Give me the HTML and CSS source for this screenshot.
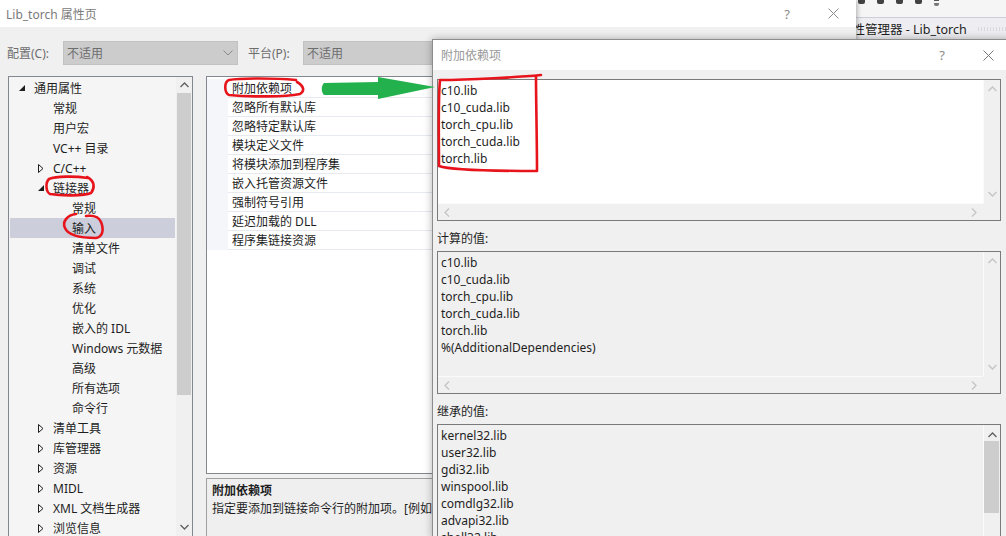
FILE: index.html
```html
<!DOCTYPE html>
<html lang="zh-CN">
<head>
    <meta charset="UTF-8">
    <title>Lib_torch 属性页</title>
    <link rel="stylesheet" href="styles.css">
</head>
<body>
<div class="desk">

    <div class="props">
        <div class="titlebar">
            <span class="title">Lib_torch 属性页</span>
            <span class="tb-btn">?</span>
            <span class="tb-btn"><svg width="11" height="11"><path d="M0.5 0.5 L10.5 10.5 M10.5 0.5 L0.5 10.5" stroke="#8a8a8a" stroke-width="1"/></svg></span>
        </div>

        <div class="config">
            <span class="lbl">配置(C):</span>
            <div class="combo"><span>不适用</span><svg width="10" height="6"><path d="M0.5 0.5 L5 5 L9.5 0.5" fill="none" stroke="#8a8a8a"/></svg></div>
            <span class="lbl plat">平台(P):</span>
            <div class="combo"><span>不适用</span></div>
        </div>

        <div class="main">
            <div class="tree">
                <div class="nodes">
                    <div class="node l0"><span class="tw"><svg width="6" height="6"><path d="M6 0 L6 6 L0 6 Z" fill="#1e1e1e"/></svg></span>通用属性</div>
                    <div class="node l1"><span class="tw"></span>常规</div>
                    <div class="node l1"><span class="tw"></span>用户宏</div>
                    <div class="node l1"><span class="tw"></span>VC++ 目录</div>
                    <div class="node l1"><span class="tw"><svg width="6" height="9"><path d="M0.5 0.5 L5 4.5 L0.5 8.5 Z" fill="none" stroke="#1e1e1e"/></svg></span>C/C++</div>
                    <div class="node l1"><span class="tw"><svg width="6" height="6"><path d="M6 0 L6 6 L0 6 Z" fill="#1e1e1e"/></svg></span>链接器</div>
                    <div class="node l2"><span class="tw"></span>常规</div>
                    <div class="node l2 sel"><span class="tw"></span>输入</div>
                    <div class="node l2"><span class="tw"></span>清单文件</div>
                    <div class="node l2"><span class="tw"></span>调试</div>
                    <div class="node l2"><span class="tw"></span>系统</div>
                    <div class="node l2"><span class="tw"></span>优化</div>
                    <div class="node l2"><span class="tw"></span>嵌入的 IDL</div>
                    <div class="node l2"><span class="tw"></span>Windows 元数据</div>
                    <div class="node l2"><span class="tw"></span>高级</div>
                    <div class="node l2"><span class="tw"></span>所有选项</div>
                    <div class="node l2"><span class="tw"></span>命令行</div>
                    <div class="node l1"><span class="tw"><svg width="6" height="9"><path d="M0.5 0.5 L5 4.5 L0.5 8.5 Z" fill="none" stroke="#1e1e1e"/></svg></span>清单工具</div>
                    <div class="node l1"><span class="tw"><svg width="6" height="9"><path d="M0.5 0.5 L5 4.5 L0.5 8.5 Z" fill="none" stroke="#1e1e1e"/></svg></span>库管理器</div>
                    <div class="node l1"><span class="tw"><svg width="6" height="9"><path d="M0.5 0.5 L5 4.5 L0.5 8.5 Z" fill="none" stroke="#1e1e1e"/></svg></span>资源</div>
                    <div class="node l1"><span class="tw"><svg width="6" height="9"><path d="M0.5 0.5 L5 4.5 L0.5 8.5 Z" fill="none" stroke="#1e1e1e"/></svg></span>MIDL</div>
                    <div class="node l1"><span class="tw"><svg width="6" height="9"><path d="M0.5 0.5 L5 4.5 L0.5 8.5 Z" fill="none" stroke="#1e1e1e"/></svg></span>XML 文档生成器</div>
                    <div class="node l1"><span class="tw"><svg width="6" height="9"><path d="M0.5 0.5 L5 4.5 L0.5 8.5 Z" fill="none" stroke="#1e1e1e"/></svg></span>浏览信息</div>
                </div>
                <div class="tree-scroll">
                    <div class="sb-btn"><svg width="9" height="6"><path d="M0.5 5 L4.5 1 L8.5 5" fill="none" stroke="#606060" stroke-width="1.3"/></svg></div>
                    <div class="tree-thumb"></div>
                    <div class="sb-btn end"><svg width="9" height="6"><path d="M0.5 1 L4.5 5 L8.5 1" fill="none" stroke="#606060" stroke-width="1.3"/></svg></div>
                </div>
            </div>

            <div class="right">
                <div class="grid">
                    <div class="prop"><span class="gut"></span><span class="name">附加依赖项</span></div>
                    <div class="prop"><span class="gut"></span><span class="name">忽略所有默认库</span></div>
                    <div class="prop"><span class="gut"></span><span class="name">忽略特定默认库</span></div>
                    <div class="prop"><span class="gut"></span><span class="name">模块定义文件</span></div>
                    <div class="prop"><span class="gut"></span><span class="name">将模块添加到程序集</span></div>
                    <div class="prop"><span class="gut"></span><span class="name">嵌入托管资源文件</span></div>
                    <div class="prop"><span class="gut"></span><span class="name">强制符号引用</span></div>
                    <div class="prop"><span class="gut"></span><span class="name">延迟加载的 DLL</span></div>
                    <div class="prop"><span class="gut"></span><span class="name">程序集链接资源</span></div>
                </div>
                <div class="desc">
                    <div class="desc-title">附加依赖项</div>
                    <div>指定要添加到链接命令行的附加项。[例如</div>
                </div>
            </div>
        </div>
    </div>

    <div class="vs">
        <div class="vs-tools">
            <span class="tool"></span><span class="tool"></span><span class="tool"></span><span class="tool"></span><span class="tool drop"></span>
        </div>
        <div class="vs-tab">
            <span class="vs-name">属性管理器 - Lib_torch</span>
            <span class="grip"></span>
        </div>
    </div>

    <div class="dialog">
        <div class="dlg-title">
            <span class="title">附加依赖项</span>
            <span class="tb-btn">?</span>
            <span class="tb-btn"><svg width="11" height="11"><path d="M0.5 0.5 L10.5 10.5 M10.5 0.5 L0.5 10.5" stroke="#777" stroke-width="1"/></svg></span>
        </div>
        <div class="dlg-body">
            <div class="edit main-edit">
                <div class="lines">
                    <div>c10.lib</div>
                    <div>c10_cuda.lib</div>
                    <div>torch_cpu.lib</div>
                    <div>torch_cuda.lib</div>
                    <div>torch.lib</div>
                </div>
                <div class="vbar">
                    <svg width="9" height="6"><path d="M0.5 5 L4.5 1 L8.5 5" fill="none" stroke="#c4c4c4" stroke-width="1.3"/></svg>
                    <svg width="9" height="6"><path d="M0.5 1 L4.5 5 L8.5 1" fill="none" stroke="#c4c4c4" stroke-width="1.3"/></svg>
                </div>
                <div class="hbar">
                    <svg width="6" height="9"><path d="M5 0.5 L1 4.5 L5 8.5" fill="none" stroke="#c4c4c4" stroke-width="1.3"/></svg>
                    <svg width="6" height="9"><path d="M1 0.5 L5 4.5 L1 8.5" fill="none" stroke="#c4c4c4" stroke-width="1.3"/></svg>
                </div>
                <div class="corner"></div>
            </div>

            <div class="field-label">计算的值:</div>
            <div class="edit calc-edit">
                <div class="lines">
                    <div>c10.lib</div>
                    <div>c10_cuda.lib</div>
                    <div>torch_cpu.lib</div>
                    <div>torch_cuda.lib</div>
                    <div>torch.lib</div>
                    <div>%(AdditionalDependencies)</div>
                </div>
                <div class="vbar">
                    <svg width="9" height="6"><path d="M0.5 5 L4.5 1 L8.5 5" fill="none" stroke="#c4c4c4" stroke-width="1.3"/></svg>
                    <svg width="9" height="6"><path d="M0.5 1 L4.5 5 L8.5 1" fill="none" stroke="#c4c4c4" stroke-width="1.3"/></svg>
                </div>
                <div class="hbar">
                    <svg width="6" height="9"><path d="M5 0.5 L1 4.5 L5 8.5" fill="none" stroke="#c4c4c4" stroke-width="1.3"/></svg>
                    <svg width="6" height="9"><path d="M1 0.5 L5 4.5 L1 8.5" fill="none" stroke="#c4c4c4" stroke-width="1.3"/></svg>
                </div>
                <div class="corner"></div>
            </div>

            <div class="field-label">继承的值:</div>
            <div class="edit inh-edit">
                <div class="lines">
                    <div>kernel32.lib</div>
                    <div>user32.lib</div>
                    <div>gdi32.lib</div>
                    <div>winspool.lib</div>
                    <div>comdlg32.lib</div>
                    <div>advapi32.lib</div>
                    <div>shell32.lib</div>
                </div>
                <div class="vbar live">
                    <svg width="9" height="6"><path d="M0.5 5 L4.5 1 L8.5 5" fill="none" stroke="#606060" stroke-width="1.3"/></svg>
                    <div class="thumb"></div>
                </div>
            </div>
        </div>
    </div>

    <svg class="marks" width="1006" height="536" viewBox="0 0 1006 536">
        <g fill="none" stroke="#e8141c" stroke-width="2.6" stroke-linecap="round" stroke-linejoin="round">
            <path d="M296 80 C275 78 240 78 229 80 C224 82 224 92 229 95 C250 97 285 97 300 94 C305 91 304 86 297 82"/>
            <path d="M88 178 C75 176 56 176 49 179 C45 183 46 192 50 194 C62 196 84 196 91 193 C95 188 95 181 87 177"/>
            <path d="M76 214 C67 215 62 222 65 228 C68 235 80 238 96 238 C103 237 104 229 101 222 C99 217 95 215 86 216"/>
            <path d="M541 75 C520 77 470 80 440 80 C438 100 439 140 439 166 C450 170 500 171 537 171 C537 140 536 100 536 77"/>
        </g>
        <path d="M324 83 L378 82 L378 77 L435 87 L378 99 L378 95 L324 95 C321 92 321 86 324 83 Z" fill="#22b14c"/>
    </svg>

</div>
</body>
</html>
```

FILE: styles.css
```css
* {
    box-sizing: border-box;
}

html,
body {
    margin: 0;
}

body {
    font-family: "Noto Sans", "Noto Sans CJK SC", sans-serif;
    font-size: 12px;
    color: #1e1e1e;
    background: #f0f0f0;
}

.desk {
    position: relative;
    display: flex;
    width: 1006px;
    height: 536px;
    overflow: hidden;
}

/* back window */
.props {
    flex: none;
    position: relative;
    z-index: 1;
    width: 856px;
    height: 536px;
    background: #f0f0f0;
    box-shadow: 1px 0 5px rgba(0, 0, 0, 0.3);
}

.titlebar {
    display: flex;
    align-items: center;
    height: 27px;
    background: #fff;
}

.title {
    flex: 1;
    padding-left: 6px;
    color: #7a7a7a;
    white-space: nowrap;
}

.tb-btn {
    display: flex;
    align-items: center;
    justify-content: center;
    width: 46px;
    height: 100%;
    color: #8a8a8a;
    font-size: 13px;
}

.config {
    display: flex;
    align-items: center;
    height: 24px;
    margin-top: 14px;
    padding-left: 7px;
    color: #6d6d6d;
}

.lbl {
    width: 56px;
    white-space: nowrap;
}

.plat {
    width: 55px;
    margin-left: 10px;
}

.combo {
    display: flex;
    align-items: center;
    justify-content: space-between;
    width: 175px;
    height: 24px;
    padding: 0 4px 0 3px;
    background: #cccccc;
    border: 1px solid #c2c2c2;
}

.main {
    display: flex;
    gap: 13px;
    height: 462px;
    margin-top: 11px;
    padding-left: 8px;
}

/* tree */
.tree {
    display: flex;
    width: 185px;
    height: 100%;
    background: #f5f5f5;
    border: 1px solid #828790;
}

.nodes {
    flex: 1;
    padding: 1px;
}

.node {
    display: flex;
    align-items: center;
    height: 20px;
    white-space: nowrap;
}

.node.l0 {
    padding-left: 6px;
}

.node.l1 {
    padding-left: 25px;
}

.node.l2 {
    padding-left: 44px;
}

.node.sel {
    background: #cccedb;
}

.tw {
    display: flex;
    align-items: center;
    justify-content: center;
    width: 12px;
    margin-right: 6px;
}

.tree-scroll {
    display: flex;
    flex-direction: column;
    width: 16px;
    background: #f0f0f0;
}

.sb-btn {
    display: flex;
    align-items: center;
    justify-content: center;
    height: 16px;
}

.sb-btn.end {
    margin-top: auto;
    height: 20px;
}

.tree-thumb {
    height: 302px;
    margin: 0 1px;
    background: #cdcdcd;
}

/* property grid */
.right {
    display: flex;
    flex-direction: column;
    gap: 4px;
    width: 226px;
    overflow: hidden;
}

.grid {
    height: 398px;
    padding-top: 2px;
    background: #fff;
    border: 1px solid #828790;
    border-right: 0;
}

.prop {
    display: flex;
    height: 19px;
}

.gut {
    width: 21px;
    background: #f4f6fa;
}

.name {
    flex: 1;
    display: flex;
    align-items: center;
    padding-left: 4px;
    border-bottom: 1px solid #e6e9f0;
    white-space: nowrap;
}

.desc {
    flex: 1;
    padding: 3px 5px;
    background: #efefef;
    border: 1px solid #a0a0a0;
    border-right: 0;
    line-height: 18px;
    white-space: nowrap;
    overflow: hidden;
}

.desc-title {
    font-weight: bold;
}

/* window behind, top right */
.vs {
    flex: 1;
    overflow: hidden;
    background: #eeeef2;
}

.vs-tools {
    display: flex;
    gap: 12px;
    height: 18px;
    padding-left: 2px;
    background: #f5f5f5;
    border-bottom: 1px solid #cccedb;
}

.tool {
    width: 7px;
    height: 4px;
    background: #424242;
    border-radius: 0 0 2px 2px;
}

.tool.drop {
    width: 5px;
    height: 6px;
    background: none;
    border-top: 1px solid #555;
    border-bottom: 3px solid #777;
}

.vs-tab {
    display: flex;
    align-items: center;
    height: 21px;
    margin-left: -16px;
    white-space: nowrap;
}

.vs-name {
    font-size: 12.5px;
}

.grip {
    width: 30px;
    height: 4px;
    margin-left: 10px;
    background-image: radial-gradient(#9a9aa0 0.6px, transparent 0.8px);
    background-size: 3px 2px;
}

/* front dialog */
.dialog {
    position: absolute;
    z-index: 2;
    left: 432px;
    top: 39px;
    width: 580px;
    height: 500px;
    background: #f0f0f0;
    border: 1px solid #8c8c8c;
    box-shadow: 0 0 8px rgba(0, 0, 0, 0.3);
}

.dlg-title {
    display: flex;
    align-items: center;
    height: 30px;
    background: #fff;
}

.dlg-title .title {
    padding-left: 8px;
    color: #999;
}

.dlg-body {
    padding: 9px 10px 0 4px;
}

.edit {
    display: grid;
    grid-template-columns: 1fr 17px;
    grid-template-rows: 1fr 17px;
    border: 1px solid #7a7a7a;
}

.main-edit {
    height: 142px;
}

.main-edit .lines {
    background: #fff;
}

.calc-edit {
    height: 143px;
}

.inh-edit {
    height: 120px;
    grid-template-rows: 1fr;
}

.lines {
    padding: 2px 3px;
    line-height: 17px;
    white-space: nowrap;
    overflow: hidden;
}

.vbar {
    display: flex;
    flex-direction: column;
    align-items: center;
    justify-content: space-between;
    padding: 6px 0 6px;
    background: #f0f0f0;
    border-left: 1px solid #fbfbfb;
}

.vbar.live {
    justify-content: flex-start;
    padding: 7px 0 0;
}

.thumb {
    width: 15px;
    height: 72px;
    margin-top: 3px;
    margin-right: 1px;
    background: #cdcdcd;
}

.hbar {
    display: flex;
    align-items: center;
    justify-content: space-between;
    padding: 0 6px;
    background: #f0f0f0;
    border-top: 1px solid #fbfbfb;
}

.corner {
    background: #f0f0f0;
}

.field-label {
    margin-top: 9px;
    margin-bottom: 3px;
    line-height: 18px;
}

.marks {
    position: absolute;
    z-index: 3;
    left: 0;
    top: 0;
    pointer-events: none;
}
```
